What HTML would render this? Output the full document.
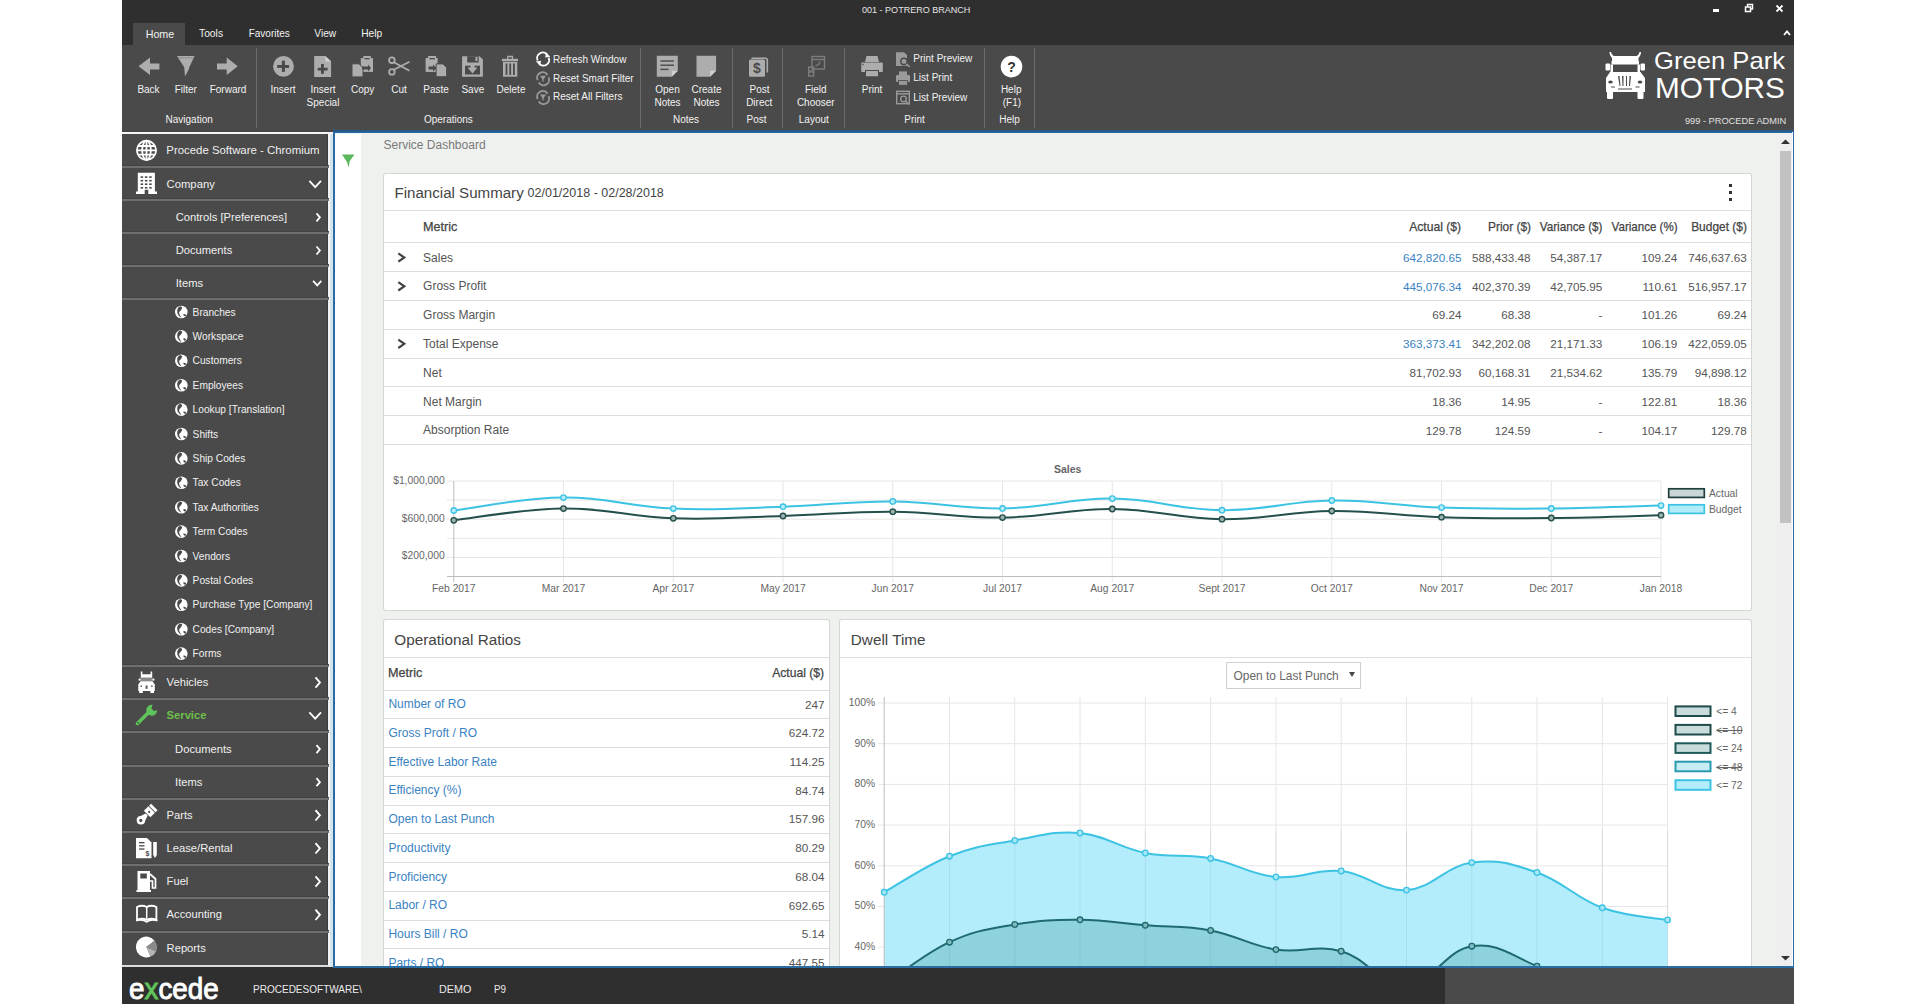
<!DOCTYPE html><html><head><meta charset="utf-8"><style>
html,body{margin:0;padding:0;}
body{width:1916px;height:1004px;position:relative;overflow:hidden;background:#fff;font-family:"Liberation Sans",sans-serif;}
.t{position:absolute;white-space:nowrap;line-height:1;}
.t span{-webkit-text-stroke:inherit;}
.r{position:absolute;}
svg{position:absolute;overflow:visible;}
</style></head><body>
<div class="r" style="left:122px;top:0px;width:1672px;height:45px;background:#2f2f2f;"></div><div class="t" style="top:4.70px;font-size:9.8px;color:#e6e6e6;left:861.50px;transform: scaleX(0.9216);transform-origin:0 0;">001 - POTRERO BRANCH</div><div class="r" style="left:1713px;top:9px;width:6px;height:2.5px;background:#fff;"></div><svg style="left:0;top:0" width="1916" height="45"><g fill="none" stroke="#fff" stroke-width="1.5"><rect x="1745.5" y="7" width="5" height="4.5"/><path d="M1747.5 7 V4.5 H1752.5 V9 H1750.5"/><path d="M1776.5 5.5 L1782.5 11.5 M1782.5 5.5 L1776.5 11.5" stroke-width="1.8"/><path d="M1784 35 L1787 31.5 L1790 35" stroke-width="1.8"/></g></svg><div class="r" style="left:133px;top:23px;width:52px;height:22px;background:#4a4a4a;"></div><div class="t" style="top:28.84px;font-size:10.7px;color:#f2f2f2;left:145.70px;">Home</div><div class="t" style="top:28.78px;font-size:10.3px;color:#f2f2f2;left:199.00px;">Tools</div><div class="t" style="top:29.04px;font-size:10.0px;color:#f2f2f2;left:248.70px;">Favorites</div><div class="t" style="top:28.87px;font-size:10.2px;color:#f2f2f2;left:314.30px;">View</div><div class="t" style="top:28.87px;font-size:10.2px;color:#f2f2f2;left:361.20px;">Help</div><div class="r" style="left:122px;top:45px;width:1672px;height:85px;background:#4a4a4a;"></div><div class="r" style="left:256px;top:48px;width:1px;height:80px;background:#6b6b6b;"></div><div class="r" style="left:640px;top:48px;width:1px;height:80px;background:#6b6b6b;"></div><div class="r" style="left:732px;top:48px;width:1px;height:80px;background:#6b6b6b;"></div><div class="r" style="left:782px;top:48px;width:1px;height:80px;background:#6b6b6b;"></div><div class="r" style="left:844px;top:48px;width:1px;height:80px;background:#6b6b6b;"></div><div class="r" style="left:984px;top:48px;width:1px;height:80px;background:#6b6b6b;"></div><div class="r" style="left:1034px;top:48px;width:1px;height:80px;background:#6b6b6b;"></div><div class="t" style="top:84.94px;font-size:10.0px;color:#f2f2f2;left:148.50px;transform:translateX(-50%);">Back</div><div class="t" style="top:84.94px;font-size:10.0px;color:#f2f2f2;left:185.80px;transform:translateX(-50%);">Filter</div><div class="t" style="top:84.94px;font-size:10.0px;color:#f2f2f2;left:228.00px;transform:translateX(-50%);">Forward</div><div class="t" style="top:115.33px;font-size:10.0px;color:#f2f2f2;left:189.20px;transform:translateX(-50%);">Navigation</div><div class="t" style="top:84.94px;font-size:10.0px;color:#f2f2f2;left:283.00px;transform:translateX(-50%);">Insert</div><div class="t" style="top:84.94px;font-size:10.0px;color:#f2f2f2;left:323.00px;transform:translateX(-50%);">Insert</div><div class="t" style="top:98.13px;font-size:10.0px;color:#f2f2f2;left:323.00px;transform:translateX(-50%);">Special</div><div class="t" style="top:84.94px;font-size:10.0px;color:#f2f2f2;left:362.70px;transform:translateX(-50%);">Copy</div><div class="t" style="top:84.94px;font-size:10.0px;color:#f2f2f2;left:399.00px;transform:translateX(-50%);">Cut</div><div class="t" style="top:84.94px;font-size:10.0px;color:#f2f2f2;left:436.00px;transform:translateX(-50%);">Paste</div><div class="t" style="top:84.94px;font-size:10.0px;color:#f2f2f2;left:472.80px;transform:translateX(-50%);">Save</div><div class="t" style="top:84.94px;font-size:10.0px;color:#f2f2f2;left:511.00px;transform:translateX(-50%);">Delete</div><div class="t" style="top:115.33px;font-size:10.0px;color:#f2f2f2;left:448.40px;transform:translateX(-50%);">Operations</div><div class="t" style="top:54.53px;font-size:10.0px;color:#f2f2f2;left:553.00px;">Refresh Window</div><div class="t" style="top:73.53px;font-size:10.0px;color:#f2f2f2;left:553.00px;">Reset Smart Filter</div><div class="t" style="top:92.33px;font-size:10.0px;color:#f2f2f2;left:553.00px;">Reset All Filters</div><div class="t" style="top:84.94px;font-size:10.0px;color:#f2f2f2;left:667.50px;transform:translateX(-50%);">Open</div><div class="t" style="top:98.13px;font-size:10.0px;color:#f2f2f2;left:667.50px;transform:translateX(-50%);">Notes</div><div class="t" style="top:84.94px;font-size:10.0px;color:#f2f2f2;left:706.50px;transform:translateX(-50%);">Create</div><div class="t" style="top:98.13px;font-size:10.0px;color:#f2f2f2;left:706.50px;transform:translateX(-50%);">Notes</div><div class="t" style="top:115.33px;font-size:10.0px;color:#f2f2f2;left:686.00px;transform:translateX(-50%);">Notes</div><div class="t" style="top:84.94px;font-size:10.0px;color:#f2f2f2;left:759.50px;transform:translateX(-50%);">Post</div><div class="t" style="top:98.13px;font-size:10.0px;color:#f2f2f2;left:759.20px;transform:translateX(-50%);">Direct</div><div class="t" style="top:115.33px;font-size:10.0px;color:#f2f2f2;left:756.50px;transform:translateX(-50%);">Post</div><div class="t" style="top:84.94px;font-size:10.0px;color:#f2f2f2;left:815.80px;transform:translateX(-50%);">Field</div><div class="t" style="top:98.13px;font-size:10.0px;color:#f2f2f2;left:815.80px;transform:translateX(-50%);">Chooser</div><div class="t" style="top:115.33px;font-size:10.0px;color:#f2f2f2;left:813.80px;transform:translateX(-50%);">Layout</div><div class="t" style="top:84.94px;font-size:10.0px;color:#f2f2f2;left:872.00px;transform:translateX(-50%);">Print</div><div class="t" style="top:54.14px;font-size:10.0px;color:#f2f2f2;left:913.30px;">Print Preview</div><div class="t" style="top:73.23px;font-size:10.0px;color:#f2f2f2;left:913.30px;">List Print</div><div class="t" style="top:92.53px;font-size:10.0px;color:#f2f2f2;left:913.30px;">List Preview</div><div class="t" style="top:115.33px;font-size:10.0px;color:#f2f2f2;left:914.50px;transform:translateX(-50%);">Print</div><div class="t" style="top:84.94px;font-size:10.0px;color:#f2f2f2;left:1011.20px;transform:translateX(-50%);">Help</div><div class="t" style="top:98.13px;font-size:10.0px;color:#f2f2f2;left:1011.90px;transform:translateX(-50%);">(F1)</div><div class="t" style="top:115.33px;font-size:10.0px;color:#f2f2f2;left:1009.50px;transform:translateX(-50%);">Help</div><div class="t" style="top:49.48px;font-size:24px;color:#ffffff;left:1654.10px;transform: scaleX(1.0675);transform-origin:0 0;">Green Park</div><div class="t" style="top:73.88px;font-size:29.2px;color:#ffffff;left:1654.70px;transform: scaleX(1.0171);transform-origin:0 0;">MOTORS</div><div class="t" style="top:115.60px;font-size:9.8px;color:#e0e0e0;right:129.80px;transform: scaleX(0.9452);transform-origin:100% 0;">999 - PROCEDE ADMIN</div><svg style="left:0;top:0" width="1916" height="130"><path d="M138.5 66.3 L150 57.5 L150 63.5 L159.4 63.5 L159.4 69.4 L150 69.4 L150 75 Z" fill="#adadad"/><path d="M237.7 66.3 L226.7 57.5 L226.7 63.5 L217 63.5 L217 69.4 L226.7 69.4 L226.7 75 Z" fill="#adadad"/><path d="M177 56 L194.5 56 L189.3 67.3 L188.5 70 L185 76.5 L184.2 67.3 Z" fill="#adadad"/><rect x="178" y="57.3" width="15.5" height="1" fill="#8c8c8c"/><circle cx="283.5" cy="66.4" r="10.4" fill="#adadad"/><rect x="277.2" y="65" width="11.9" height="2.9" fill="#4a4a4a"/><rect x="281.9" y="60.6" width="3" height="11.3" fill="#4a4a4a"/><path d="M314.2 56 L325.4 56 L331.1 61.5 L331.1 76.9 L314.2 76.9 Z" fill="#adadad"/><path d="M325.4 56 L331.1 61.5 L325.4 61.5 Z" fill="#cfcfcf"/><rect x="317.6" y="67.8" width="10" height="2.7" fill="#4a4a4a"/><rect x="321" y="64" width="2.9" height="9.8" fill="#4a4a4a"/><path d="M360.8 58.1 L373 58.1 L373 71.9 L360.8 71.9 Z" fill="#adadad"/><rect x="363.3" y="56" width="7.5" height="3.5" fill="#adadad"/><rect x="364.5" y="58" width="5" height="1.3" fill="#4a4a4a"/><path d="M352 63.8 L359 63.8 L363 67.8 L363 76.9 L352 76.9 Z" fill="#adadad" stroke="#4a4a4a" stroke-width="1"/><path d="M362 66.5 L368 66.5 L368 64.5 L371 68 L368 71.5 L368 69.5 L362 69.5 Z" fill="#4a4a4a"/><g fill="none" stroke="#adadad" stroke-width="1.8"><circle cx="391.9" cy="60.2" r="2.8"/><circle cx="391.9" cy="71.9" r="2.8"/><path d="M393.8 62.3 L409.5 70.8 M393.8 69.8 L409.5 61.7"/></g><rect x="425.6" y="58" width="12" height="13.9" fill="#adadad"/><rect x="428.1" y="56" width="8" height="3.5" fill="#adadad"/><rect x="429.3" y="58" width="5.6" height="1.3" fill="#4a4a4a"/><path d="M436.1 63.9 L443 63.9 L446.7 67.6 L446.7 76.7 L436.1 76.7 Z" fill="#adadad" stroke="#4a4a4a" stroke-width="1"/><path d="M428.5 66.5 L433 66.5 L433 64.5 L436.5 68 L433 71.5 L433 69.5 L428.5 69.5 Z" fill="#4a4a4a"/><path d="M462.1 56.2 L479.5 56.2 L482.9 59.6 L482.9 76.7 L462.1 76.7 Z" fill="#adadad"/><rect x="467.2" y="56.2" width="11.5" height="6.3" fill="#4a4a4a"/><rect x="475.5" y="57" width="2" height="4" fill="#adadad"/><rect x="465" y="65.7" width="15" height="8.8" fill="#4a4a4a"/><path d="M470.5 63 L474.5 63 L474.5 67.5 L477.5 67.5 L472.5 73.5 L467.5 67.5 L470.5 67.5 Z" fill="#adadad"/><rect x="501.9" y="58.8" width="16.1" height="2.4" fill="#adadad"/><path d="M507.8 59 V56.5 H512.5 V59" fill="none" stroke="#adadad" stroke-width="1.3"/><rect x="503" y="61.9" width="14.3" height="14.8" fill="#adadad"/><rect x="505.6" y="63.5" width="1.8" height="11.5" fill="#4a4a4a"/><rect x="509.3" y="63.5" width="1.8" height="11.5" fill="#4a4a4a"/><rect x="513" y="63.5" width="1.8" height="11.5" fill="#4a4a4a"/><g fill="none" stroke="#fff" stroke-width="1.9"><path d="M537.6 60.5 A5.6 5.6 0 0 1 547.5 55.3"/><path d="M548.6 57.7 A5.6 5.6 0 0 1 538.7 62.9"/></g><path d="M546 52.5 L550.3 56.8 L545.2 57.5 Z M540.2 65.7 L535.9 61.4 L541 60.7 Z" fill="#fff"/><g fill="none" stroke="#9a9a9a" stroke-width="1.9"><path d="M537.6 80.2 A5.6 5.6 0 0 1 547.5 75.0"/><path d="M548.6 77.39999999999999 A5.6 5.6 0 0 1 538.7 82.6"/></g><path d="M540 75.8 L546 75.8 L543.7 79.3 L543.5 81.8 L542.5 81.8 L542.3 79.3 Z" fill="#9a9a9a"/><g fill="none" stroke="#9a9a9a" stroke-width="1.9"><path d="M537.6 99.0 A5.6 5.6 0 0 1 547.5 93.8"/><path d="M548.6 96.19999999999999 A5.6 5.6 0 0 1 538.7 101.39999999999999"/></g><path d="M540 94.6 L546 94.6 L543.7 98.1 L543.5 100.6 L542.5 100.6 L542.3 98.1 Z" fill="#9a9a9a"/><path d="M656.8 55.8 L677.8 55.8 L677.8 70.8 L671.8 76.8 L656.8 76.8 Z" fill="#adadad"/><path d="M671.8 76.8 L671.8 70.8 L677.8 70.8 Z" fill="#d0d0d0"/><rect x="660.4" y="60.3" width="13.6" height="1.4" fill="#4a4a4a"/><rect x="660.4" y="64.5" width="13.6" height="1.4" fill="#4a4a4a"/><rect x="660.4" y="68.7" width="8.2" height="1.4" fill="#4a4a4a"/><path d="M696.5 55.8 L716.1 55.8 L716.1 70.8 L710.1 76.8 L696.5 76.8 Z" fill="#adadad"/><path d="M710.1 76.8 L710.1 70.8 L716.1 70.8 Z" fill="#d0d0d0"/><path d="M751.5 58.3 L765.5 58.3 A1.8 1.8 0 0 1 767.3 60.1 L767.3 72.5" fill="none" stroke="#adadad" stroke-width="1.6"/><rect x="749" y="59.5" width="16" height="17.3" rx="1.5" fill="#adadad"/><text x="757" y="73.2" font-family="Liberation Sans" font-weight="bold" font-size="14" fill="#4a4a4a" text-anchor="middle">$</text><g fill="none" stroke="#7d7d7d" stroke-width="1.4"><rect x="812" y="56.5" width="12.5" height="12.5"/><path d="M812 59.5 H824.5"/><path d="M815.5 66 L819 64 L820 61.5"/><rect x="808.7" y="67" width="5" height="4" /><rect x="808.7" y="72" width="5" height="4"/></g><path d="M866.5 56 L877.5 56 L879 62 L865 62 Z" fill="#adadad"/><rect x="861.2" y="62.5" width="21.6" height="9.5" rx="1" fill="#adadad"/><rect x="865.5" y="70.5" width="13" height="6.3" fill="#adadad" stroke="#4a4a4a" stroke-width="1"/><rect x="862.3" y="63.8" width="1.3" height="1.3" fill="#4a4a4a"/><path d="M896 52.2 L904 52.2 L907 55 L907 66 L896 66 Z" fill="#9a9a9a"/><circle cx="904" cy="61.5" r="3.2" fill="none" stroke="#4a4a4a" stroke-width="1.4"/><path d="M906.3 63.8 L909.8 67" stroke="#9a9a9a" stroke-width="1.6"/><rect x="899" y="71.4" width="8" height="4" fill="#9a9a9a"/><rect x="896" y="75" width="14" height="7" rx="1" fill="#9a9a9a"/><rect x="898.5" y="80.5" width="9" height="4.7" fill="#9a9a9a" stroke="#4a4a4a" stroke-width="0.8"/><rect x="896.7" y="91.3" width="12.6" height="12.4" fill="none" stroke="#9a9a9a" stroke-width="1.4"/><path d="M896.7 93.8 H909.3" stroke="#9a9a9a" stroke-width="1.4"/><circle cx="903.5" cy="99" r="2.8" fill="none" stroke="#9a9a9a" stroke-width="1.3"/><path d="M905.5 101 L909 104.5" stroke="#9a9a9a" stroke-width="1.6"/><circle cx="1011.5" cy="66.6" r="10.8" fill="#fff"/><text x="1011.5" y="71.6" font-family="Liberation Sans" font-weight="bold" font-size="14" fill="#333" text-anchor="middle">?</text><g fill="#fff"><path d="M1609.5 52 C1609.5 55 1611 57 1612 58 L1612 61 L1638.5 61 L1638.5 58 C1639.5 57 1641 55 1641 52 L1639.5 52 C1639 54 1638 55.5 1636.5 56 L1614 56 C1612.5 55.5 1611.5 54 1611 52 Z"/><rect x="1611.5" y="61" width="27.5" height="3.5"/><rect x="1605.5" y="63.5" width="4.5" height="7" rx="1"/><rect x="1640.5" y="63.5" width="4.5" height="7" rx="1"/><rect x="1610.5" y="64.5" width="2.5" height="8"/><rect x="1637.5" y="64.5" width="2.5" height="8"/><path d="M1610 72 L1640.5 72 L1645 78 L1645 92 L1606 92 L1606 78 Z"/><rect x="1607" y="91" width="6" height="8" rx="1"/><rect x="1637.5" y="91" width="6" height="8" rx="1"/></g><g fill="#4a4a4a"><path d="M1618 76 L1619.5 86 L1620.5 86 L1619.5 76 Z M1622 76 L1622.5 86 L1623.5 86 L1623.5 76 Z M1626 76 L1626 86 L1627 86 L1627 76 Z M1629.5 76 L1629 86 L1630 86 L1631 76 Z"/><ellipse cx="1610.5" cy="82" rx="2.3" ry="1.6"/><ellipse cx="1640" cy="82" rx="2.3" ry="1.6"/><rect x="1611" y="86.5" width="4" height="1"/><rect x="1635.5" y="86.5" width="4" height="1"/><rect x="1618" y="88.5" width="14" height="1"/></g></svg><div class="r" style="left:122px;top:130px;width:211px;height:2px;background:#464646;"></div><div class="r" style="left:122px;top:132px;width:211px;height:835px;background:#e4e4e4;"></div><div class="r" style="left:328px;top:132px;width:2px;height:835px;background:#f2f2f2;"></div><div class="r" style="left:330px;top:133px;width:3px;height:834px;background:#d6e4ee;"></div><div class="r" style="left:333px;top:130px;width:1459px;height:837px;background:#2c6aa0;"></div><div class="r" style="left:333px;top:130px;width:1461px;height:2px;background:#245a8c;"></div><div class="r" style="left:335px;top:133px;width:1457px;height:833px;background:#e6f7ff;"></div><div class="r" style="left:335px;top:134px;width:1456px;height:832px;background:#ffffff;"></div><div class="r" style="left:1792.5px;top:130px;width:1.5px;height:837px;background:#2c6aa0;"></div><div class="r" style="left:361px;top:133px;width:1431px;height:833px;background:#eef1ee;"></div><div class="r" style="left:122px;top:134px;width:205px;height:832px;background:#4a4a4a;"></div><div class="r" style="left:327px;top:134px;width:1px;height:832px;background:#3c3c3c;"></div><div class="r" style="left:122px;top:132px;width:211px;height:2px;background:#f4f4f4;"></div><div class="r" style="left:122px;top:165px;width:207px;height:1px;background:#434343;"></div><div class="r" style="left:122px;top:166px;width:207px;height:2px;background:#6e6e6e;"></div><div class="r" style="left:122px;top:198px;width:207px;height:1px;background:#434343;"></div><div class="r" style="left:122px;top:199px;width:207px;height:2px;background:#6e6e6e;"></div><div class="r" style="left:122px;top:231px;width:207px;height:1px;background:#434343;"></div><div class="r" style="left:122px;top:232px;width:207px;height:2px;background:#6e6e6e;"></div><div class="r" style="left:122px;top:264px;width:207px;height:1px;background:#434343;"></div><div class="r" style="left:122px;top:265px;width:207px;height:2px;background:#6e6e6e;"></div><div class="r" style="left:122px;top:297px;width:207px;height:1px;background:#434343;"></div><div class="r" style="left:122px;top:298px;width:207px;height:2px;background:#6e6e6e;"></div><div class="r" style="left:122px;top:664px;width:207px;height:1px;background:#434343;"></div><div class="r" style="left:122px;top:665px;width:207px;height:2px;background:#6e6e6e;"></div><div class="r" style="left:122px;top:697px;width:207px;height:1px;background:#434343;"></div><div class="r" style="left:122px;top:698px;width:207px;height:2px;background:#6e6e6e;"></div><div class="r" style="left:122px;top:730px;width:207px;height:1px;background:#434343;"></div><div class="r" style="left:122px;top:731px;width:207px;height:2px;background:#6e6e6e;"></div><div class="r" style="left:122px;top:764px;width:207px;height:1px;background:#434343;"></div><div class="r" style="left:122px;top:765px;width:207px;height:2px;background:#6e6e6e;"></div><div class="r" style="left:122px;top:797px;width:207px;height:1px;background:#434343;"></div><div class="r" style="left:122px;top:798px;width:207px;height:2px;background:#6e6e6e;"></div><div class="r" style="left:122px;top:830px;width:207px;height:1px;background:#434343;"></div><div class="r" style="left:122px;top:831px;width:207px;height:2px;background:#6e6e6e;"></div><div class="r" style="left:122px;top:863px;width:207px;height:1px;background:#434343;"></div><div class="r" style="left:122px;top:864px;width:207px;height:2px;background:#6e6e6e;"></div><div class="r" style="left:122px;top:896px;width:207px;height:1px;background:#434343;"></div><div class="r" style="left:122px;top:897px;width:207px;height:2px;background:#6e6e6e;"></div><div class="r" style="left:122px;top:930px;width:207px;height:1px;background:#434343;"></div><div class="r" style="left:122px;top:931px;width:207px;height:2px;background:#6e6e6e;"></div><div class="r" style="left:122px;top:965px;width:207px;height:2px;background:#dcdcdc;"></div><div class="t" style="top:145.45px;font-size:11.4px;color:#f0f0f0;left:166.30px;">Procede Software - Chromium</div><div class="t" style="top:178.53px;font-size:11.3px;color:#f0f0f0;left:166.50px;">Company</div><div class="t" style="top:211.72px;font-size:11.2px;color:#f0f0f0;left:175.70px;">Controls [Preferences]</div><div class="t" style="top:244.92px;font-size:11.2px;color:#f0f0f0;left:175.70px;">Documents</div><div class="t" style="top:278.12px;font-size:11.2px;color:#f0f0f0;left:175.70px;">Items</div><div class="t" style="top:307.67px;font-size:10.2px;color:#f0f0f0;left:192.60px;">Branches</div><div class="t" style="top:332.07px;font-size:10.2px;color:#f0f0f0;left:192.60px;">Workspace</div><div class="t" style="top:356.47px;font-size:10.2px;color:#f0f0f0;left:192.60px;">Customers</div><div class="t" style="top:380.87px;font-size:10.2px;color:#f0f0f0;left:192.60px;">Employees</div><div class="t" style="top:405.27px;font-size:10.2px;color:#f0f0f0;left:192.60px;">Lookup [Translation]</div><div class="t" style="top:429.67px;font-size:10.2px;color:#f0f0f0;left:192.60px;">Shifts</div><div class="t" style="top:454.07px;font-size:10.2px;color:#f0f0f0;left:192.60px;">Ship Codes</div><div class="t" style="top:478.47px;font-size:10.2px;color:#f0f0f0;left:192.60px;">Tax Codes</div><div class="t" style="top:502.87px;font-size:10.2px;color:#f0f0f0;left:192.60px;">Tax Authorities</div><div class="t" style="top:527.27px;font-size:10.2px;color:#f0f0f0;left:192.60px;">Term Codes</div><div class="t" style="top:551.67px;font-size:10.2px;color:#f0f0f0;left:192.60px;">Vendors</div><div class="t" style="top:576.07px;font-size:10.2px;color:#f0f0f0;left:192.60px;">Postal Codes</div><div class="t" style="top:600.47px;font-size:10.2px;color:#f0f0f0;left:192.60px;">Purchase Type [Company]</div><div class="t" style="top:624.87px;font-size:10.2px;color:#f0f0f0;left:192.60px;">Codes [Company]</div><div class="t" style="top:649.27px;font-size:10.2px;color:#f0f0f0;left:192.60px;">Forms</div><div class="t" style="top:677.12px;font-size:11.2px;color:#f0f0f0;left:166.60px;">Vehicles</div><div class="t" style="top:710.02px;font-size:11.2px;color:#6cc04a;font-weight:bold;left:166.60px;">Service</div><div class="t" style="top:743.62px;font-size:11.2px;color:#f0f0f0;left:175.10px;">Documents</div><div class="t" style="top:776.52px;font-size:11.2px;color:#f0f0f0;left:175.10px;">Items</div><div class="t" style="top:809.82px;font-size:11.2px;color:#f0f0f0;left:166.60px;">Parts</div><div class="t" style="top:842.72px;font-size:11.2px;color:#f0f0f0;left:166.60px;">Lease/Rental</div><div class="t" style="top:876.02px;font-size:11.2px;color:#f0f0f0;left:166.60px;">Fuel</div><div class="t" style="top:909.32px;font-size:11.2px;color:#f0f0f0;left:166.60px;">Accounting</div><div class="t" style="top:942.52px;font-size:11.2px;color:#f0f0f0;left:166.60px;">Reports</div><svg style="left:0;top:0" width="1916" height="1004"><g fill="none" stroke="#ffffff" stroke-width="1.8"><circle cx="146.5" cy="150.3" r="9.6"/><ellipse cx="146.5" cy="150.3" rx="4.32" ry="9.6"/><path d="M146.5 140.70000000000002 V159.9 M136.9 150.3 H156.1 M138.15 145.98 H154.85 M138.15 154.62 H154.85"/></g><path d="M137.8 172.8 L154.9 172.8 L154.9 191.6 L157 191.6 L157 194 L148.3 194 L148.3 189.8 L144.7 189.8 L144.7 194 L136 194 L136 191.6 L137.8 191.6 Z" fill="#ffffff"/><rect x="140.6" y="176.3" width="2.5" height="1.6" fill="#4a4a4a"/><rect x="144.9" y="176.3" width="2.5" height="1.6" fill="#4a4a4a"/><rect x="149.2" y="176.3" width="2.5" height="1.6" fill="#4a4a4a"/><rect x="140.6" y="179.9" width="2.5" height="1.6" fill="#4a4a4a"/><rect x="144.9" y="179.9" width="2.5" height="1.6" fill="#4a4a4a"/><rect x="149.2" y="179.9" width="2.5" height="1.6" fill="#4a4a4a"/><rect x="140.6" y="183.4" width="2.5" height="1.6" fill="#4a4a4a"/><rect x="144.9" y="183.4" width="2.5" height="1.6" fill="#4a4a4a"/><rect x="149.2" y="183.4" width="2.5" height="1.6" fill="#4a4a4a"/><rect x="140.6" y="187.0" width="2.5" height="1.6" fill="#4a4a4a"/><rect x="144.9" y="187.0" width="2.5" height="1.6" fill="#4a4a4a"/><rect x="149.2" y="187.0" width="2.5" height="1.6" fill="#4a4a4a"/><circle cx="181.3" cy="312.0" r="6.3" fill="#ffffff"/><path d="M180.5 306.2 C178 306.9 176.8 309.4 177.3 312.4 C177.8 314.9 179.5 316.9 181.5 317.6 C180 315.4 178.6 313.4 179.3 311.7 C180.8 310.6 182 308.9 182.2 307.4 Z" fill="#4a4a4a"/><path d="M183.3 314.0 C185 313.6 186.2 314.4 186 315.7 C185 316.7 183.5 316.4 183.3 314.0 Z" fill="#4a4a4a"/><circle cx="181.3" cy="336.4" r="6.3" fill="#ffffff"/><path d="M180.5 330.6 C178 331.3 176.8 333.8 177.3 336.8 C177.8 339.3 179.5 341.3 181.5 342.0 C180 339.8 178.6 337.8 179.3 336.1 C180.8 335.0 182 333.3 182.2 331.8 Z" fill="#4a4a4a"/><path d="M183.3 338.4 C185 338.0 186.2 338.8 186 340.1 C185 341.1 183.5 340.8 183.3 338.4 Z" fill="#4a4a4a"/><circle cx="181.3" cy="360.8" r="6.3" fill="#ffffff"/><path d="M180.5 355.0 C178 355.7 176.8 358.2 177.3 361.2 C177.8 363.7 179.5 365.7 181.5 366.4 C180 364.2 178.6 362.2 179.3 360.5 C180.8 359.4 182 357.7 182.2 356.2 Z" fill="#4a4a4a"/><path d="M183.3 362.8 C185 362.4 186.2 363.2 186 364.5 C185 365.5 183.5 365.2 183.3 362.8 Z" fill="#4a4a4a"/><circle cx="181.3" cy="385.2" r="6.3" fill="#ffffff"/><path d="M180.5 379.4 C178 380.1 176.8 382.6 177.3 385.6 C177.8 388.1 179.5 390.1 181.5 390.8 C180 388.6 178.6 386.6 179.3 384.9 C180.8 383.8 182 382.1 182.2 380.6 Z" fill="#4a4a4a"/><path d="M183.3 387.2 C185 386.8 186.2 387.6 186 388.9 C185 389.9 183.5 389.6 183.3 387.2 Z" fill="#4a4a4a"/><circle cx="181.3" cy="409.6" r="6.3" fill="#ffffff"/><path d="M180.5 403.8 C178 404.5 176.8 407.0 177.3 410.0 C177.8 412.5 179.5 414.5 181.5 415.2 C180 413.0 178.6 411.0 179.3 409.3 C180.8 408.2 182 406.5 182.2 405.0 Z" fill="#4a4a4a"/><path d="M183.3 411.6 C185 411.2 186.2 412.0 186 413.3 C185 414.3 183.5 414.0 183.3 411.6 Z" fill="#4a4a4a"/><circle cx="181.3" cy="434.0" r="6.3" fill="#ffffff"/><path d="M180.5 428.2 C178 428.9 176.8 431.4 177.3 434.4 C177.8 436.9 179.5 438.9 181.5 439.6 C180 437.4 178.6 435.4 179.3 433.7 C180.8 432.6 182 430.9 182.2 429.4 Z" fill="#4a4a4a"/><path d="M183.3 436.0 C185 435.6 186.2 436.4 186 437.7 C185 438.7 183.5 438.4 183.3 436.0 Z" fill="#4a4a4a"/><circle cx="181.3" cy="458.4" r="6.3" fill="#ffffff"/><path d="M180.5 452.6 C178 453.3 176.8 455.8 177.3 458.8 C177.8 461.3 179.5 463.3 181.5 464.0 C180 461.8 178.6 459.8 179.3 458.1 C180.8 457.0 182 455.3 182.2 453.8 Z" fill="#4a4a4a"/><path d="M183.3 460.4 C185 460.0 186.2 460.8 186 462.1 C185 463.1 183.5 462.8 183.3 460.4 Z" fill="#4a4a4a"/><circle cx="181.3" cy="482.8" r="6.3" fill="#ffffff"/><path d="M180.5 477.0 C178 477.7 176.8 480.2 177.3 483.2 C177.8 485.7 179.5 487.7 181.5 488.4 C180 486.2 178.6 484.2 179.3 482.5 C180.8 481.4 182 479.7 182.2 478.2 Z" fill="#4a4a4a"/><path d="M183.3 484.8 C185 484.4 186.2 485.2 186 486.5 C185 487.5 183.5 487.2 183.3 484.8 Z" fill="#4a4a4a"/><circle cx="181.3" cy="507.2" r="6.3" fill="#ffffff"/><path d="M180.5 501.4 C178 502.1 176.8 504.6 177.3 507.6 C177.8 510.1 179.5 512.1 181.5 512.8 C180 510.6 178.6 508.6 179.3 506.9 C180.8 505.8 182 504.1 182.2 502.6 Z" fill="#4a4a4a"/><path d="M183.3 509.2 C185 508.8 186.2 509.6 186 510.9 C185 511.9 183.5 511.6 183.3 509.2 Z" fill="#4a4a4a"/><circle cx="181.3" cy="531.6" r="6.3" fill="#ffffff"/><path d="M180.5 525.8 C178 526.5 176.8 529.0 177.3 532.0 C177.8 534.5 179.5 536.5 181.5 537.2 C180 535.0 178.6 533.0 179.3 531.3 C180.8 530.2 182 528.5 182.2 527.0 Z" fill="#4a4a4a"/><path d="M183.3 533.6 C185 533.2 186.2 534.0 186 535.3 C185 536.3 183.5 536.0 183.3 533.6 Z" fill="#4a4a4a"/><circle cx="181.3" cy="556.0" r="6.3" fill="#ffffff"/><path d="M180.5 550.2 C178 550.9 176.8 553.4 177.3 556.4 C177.8 558.9 179.5 560.9 181.5 561.6 C180 559.4 178.6 557.4 179.3 555.7 C180.8 554.6 182 552.9 182.2 551.4 Z" fill="#4a4a4a"/><path d="M183.3 558.0 C185 557.6 186.2 558.4 186 559.7 C185 560.7 183.5 560.4 183.3 558.0 Z" fill="#4a4a4a"/><circle cx="181.3" cy="580.4" r="6.3" fill="#ffffff"/><path d="M180.5 574.6 C178 575.3 176.8 577.8 177.3 580.8 C177.8 583.3 179.5 585.3 181.5 586.0 C180 583.8 178.6 581.8 179.3 580.1 C180.8 579.0 182 577.3 182.2 575.8 Z" fill="#4a4a4a"/><path d="M183.3 582.4 C185 582.0 186.2 582.8 186 584.1 C185 585.1 183.5 584.8 183.3 582.4 Z" fill="#4a4a4a"/><circle cx="181.3" cy="604.8" r="6.3" fill="#ffffff"/><path d="M180.5 599.0 C178 599.7 176.8 602.2 177.3 605.2 C177.8 607.7 179.5 609.7 181.5 610.4 C180 608.2 178.6 606.2 179.3 604.5 C180.8 603.4 182 601.7 182.2 600.2 Z" fill="#4a4a4a"/><path d="M183.3 606.8 C185 606.4 186.2 607.2 186 608.5 C185 609.5 183.5 609.2 183.3 606.8 Z" fill="#4a4a4a"/><circle cx="181.3" cy="629.2" r="6.3" fill="#ffffff"/><path d="M180.5 623.4 C178 624.1 176.8 626.6 177.3 629.6 C177.8 632.1 179.5 634.1 181.5 634.8 C180 632.6 178.6 630.6 179.3 628.9 C180.8 627.8 182 626.1 182.2 624.6 Z" fill="#4a4a4a"/><path d="M183.3 631.2 C185 630.8 186.2 631.6 186 632.9 C185 633.9 183.5 633.6 183.3 631.2 Z" fill="#4a4a4a"/><circle cx="181.3" cy="653.6" r="6.3" fill="#ffffff"/><path d="M180.5 647.8 C178 648.5 176.8 651.0 177.3 654.0 C177.8 656.5 179.5 658.5 181.5 659.2 C180 657.0 178.6 655.0 179.3 653.3 C180.8 652.2 182 650.5 182.2 649.0 Z" fill="#4a4a4a"/><path d="M183.3 655.6 C185 655.2 186.2 656.0 186 657.3 C185 658.3 183.5 658.0 183.3 655.6 Z" fill="#4a4a4a"/><path d="M309.4 180.81 L315.2 187.19 L321.0 180.81" fill="none" stroke="#ffffff" stroke-width="1.8"/><path d="M316.5 213.3 L319.90 217.3 L316.5 221.3" fill="none" stroke="#ffffff" stroke-width="1.8"/><path d="M316.5 246.5 L319.90 250.5 L316.5 254.5" fill="none" stroke="#ffffff" stroke-width="1.8"/><path d="M313.09999999999997 280.85 L317.2 285.36 L321.3 280.85" fill="none" stroke="#ffffff" stroke-width="1.8"/><path d="M315.5 677.3 L319.92 682.5 L315.5 687.7" fill="none" stroke="#ffffff" stroke-width="1.9"/><path d="M309.4 712.31 L315.2 718.69 L321.0 712.31" fill="none" stroke="#ffffff" stroke-width="1.8"/><path d="M316.5 745.1 L319.90 749.1 L316.5 753.1" fill="none" stroke="#ffffff" stroke-width="1.8"/><path d="M316.5 778.2 L319.90 782.2 L316.5 786.2" fill="none" stroke="#ffffff" stroke-width="1.8"/><path d="M315.5 810.0999999999999 L319.92 815.3 L315.5 820.5" fill="none" stroke="#ffffff" stroke-width="1.9"/><path d="M315.5 843.0999999999999 L319.92 848.3 L315.5 853.5" fill="none" stroke="#ffffff" stroke-width="1.9"/><path d="M315.5 876.3 L319.92 881.5 L315.5 886.7" fill="none" stroke="#ffffff" stroke-width="1.9"/><path d="M315.5 909.5999999999999 L319.92 914.8 L315.5 920.0" fill="none" stroke="#ffffff" stroke-width="1.9"/><g fill="#ffffff"><rect x="140.8" y="671.5" width="1.6" height="4"/><rect x="150.6" y="671.5" width="1.6" height="4"/><path d="M141 674.3 L152 674.3 L152.3 678 L140.7 678 Z"/><rect x="140.5" y="677.5" width="12" height="3.8" rx="1.2" fill="#8a8a8a"/><rect x="138.6" y="678.6" width="2" height="2"/><rect x="152.4" y="678.6" width="2" height="2"/><path d="M140.5 681.2 L152.5 681.2 L154.8 684.5 L154.8 691 L138.3 691 L138.3 684.5 Z"/><rect x="139.2" y="690" width="3.6" height="3"/><rect x="150.4" y="690" width="3.6" height="3"/></g><g fill="#5a5a5a"><rect x="140.5" y="685.3" width="1.3" height="1.7"/><rect x="145.6" y="685.5" width="2" height="3.3"/><rect x="151.2" y="685.3" width="1.3" height="1.7"/></g><g><path d="M137.5 723.5 L149 712" stroke="#5dc35a" stroke-width="3.6" stroke-linecap="round"/><path d="M152.5 704.8 A5.5 5.5 0 1 0 157.2 710.2 L153.8 711 L151.5 708.5 Z" fill="#5dc35a"/><circle cx="138.3" cy="722.8" r="0.9" fill="#2a5a2a"/></g><g transform="translate(149.2 812) rotate(45)"><g fill="#fff"><rect x="-4.6" y="-7.2" width="9.2" height="2.8"/><rect x="-4.6" y="-3.4" width="9.2" height="6.3"/><path d="M-1.5 3.6 L1.5 3.6 L3.2 8.8 A4.3 4.3 0 1 1 -3.2 8.8 Z"/></g><circle cx="0" cy="0" r="1.1" fill="#4a4a4a"/><circle cx="0" cy="11.9" r="1.6" fill="#4a4a4a"/></g><path d="M136 838 L147 838 L151.5 842.5 L151.5 858.2 L136 858.2 Z" fill="#ffffff"/><g fill="#4a4a4a"><rect x="139" y="842" width="5.5" height="1.3"/><rect x="139" y="845.2" width="5.5" height="1.3"/><rect x="139" y="848.4" width="5.5" height="1.3"/></g><text x="147.5" y="856" font-family="Liberation Sans" font-size="7" font-weight="bold" fill="#4a4a4a" text-anchor="middle">$</text><path d="M153.2 842 L156.8 842 L156.8 855 L155 858 L153.2 855 Z" fill="#ffffff"/><path d="M137.5 871 L150 871 L150 890 L151 890 L151 892 L136.5 892 L136.5 890 L137.5 890 Z" fill="#ffffff"/><rect x="140.3" y="873.5" width="6.5" height="5" fill="#4a4a4a"/><path d="M150 874 L155.5 879 L155.5 888 L152.5 888 L152.5 881 L150 881" fill="none" stroke="#ffffff" stroke-width="1.7"/><path d="M137 907 C140 905.5 144 905.5 146.7 907 C149.4 905.5 153.4 905.5 156.4 907 L156.4 920 C153.4 918.5 149.4 918.5 146.7 920 C144 918.5 140 918.5 137 920 Z" fill="none" stroke="#ffffff" stroke-width="1.8"/><path d="M146.7 907 V920" stroke="#ffffff" stroke-width="1.5"/><path d="M136 920.5 C140 919.5 144 919.5 146.7 922 C149.4 919.5 153.4 919.5 157.4 920.5" fill="none" stroke="#ffffff" stroke-width="1.6"/><path d="M154.6 940.8 A10.4 10.4 0 1 0 150.5 956.5 L146.4 947.1 Z" fill="#ffffff"/><path d="M154.6 940.8 A10.4 10.4 0 0 1 156.2 951.5 L146.4 947.1 Z" fill="#8a8a8a"/><path d="M156.2 951.5 A10.4 10.4 0 0 1 150.5 956.5 L146.4 947.1 Z" fill="#b5b5b5"/><path d="M342 154.5 L354.5 154.5 L349.8 161 L348.5 167.5 L347 162 Z" fill="#5cb85c"/></svg><div class="t" style="top:138.84px;font-size:12.0px;color:#7a7a7a;left:383.50px;">Service Dashboard</div><div class="r" style="left:383px;top:173px;width:1369px;height:438px;background:#d3d6d3;border-radius:3px;"></div><div class="r" style="left:384px;top:174px;width:1367px;height:436px;background:#ffffff;border-radius:2px;"></div><div class="t" style="top:185.22px;font-size:15.1px;color:#444;left:394.50px;">Financial Summary</div><div class="t" style="top:187.42px;font-size:12.5px;color:#444;left:527.60px;">02/01/2018 - 02/28/2018</div><div class="r" style="left:384px;top:210px;width:1367px;height:1px;background:#dedede;"></div><div class="r" style="left:384px;top:242px;width:1367px;height:1px;background:#dedede;"></div><div class="r" style="left:384px;top:271px;width:1367px;height:1px;background:#dedede;"></div><div class="r" style="left:384px;top:300px;width:1367px;height:1px;background:#dedede;"></div><div class="r" style="left:384px;top:329px;width:1367px;height:1px;background:#dedede;"></div><div class="r" style="left:384px;top:358px;width:1367px;height:1px;background:#dedede;"></div><div class="r" style="left:384px;top:386px;width:1367px;height:1px;background:#dedede;"></div><div class="r" style="left:384px;top:415px;width:1367px;height:1px;background:#dedede;"></div><div class="r" style="left:384px;top:444px;width:1367px;height:1px;background:#dedede;"></div><div class="t" style="top:221.00px;font-size:12.4px;color:#444;left:423.10px;transform: scaleX(1.0192);transform-origin:0 0;-webkit-text-stroke:0.25px #444;">Metric</div><div class="t" style="top:221.17px;font-size:12.2px;color:#444;right:454.60px;transform: scaleX(0.9961);transform-origin:100% 0;-webkit-text-stroke:0.25px #444;">Actual ($)</div><div class="t" style="top:221.17px;font-size:12.2px;color:#444;right:385.40px;transform: scaleX(0.9783);transform-origin:100% 0;-webkit-text-stroke:0.25px #444;">Prior ($)</div><div class="t" style="top:221.17px;font-size:12.2px;color:#444;right:313.70px;transform: scaleX(0.9582);transform-origin:100% 0;-webkit-text-stroke:0.25px #444;">Variance ($)</div><div class="t" style="top:221.17px;font-size:12.2px;color:#444;right:238.70px;transform: scaleX(0.9482);transform-origin:100% 0;-webkit-text-stroke:0.25px #444;">Variance (%)</div><div class="t" style="top:221.17px;font-size:12.2px;color:#444;right:169.20px;transform: scaleX(0.9796);transform-origin:100% 0;-webkit-text-stroke:0.25px #444;">Budget ($)</div><div class="t" style="top:251.64px;font-size:12.0px;color:#555;left:423.10px;">Sales</div><div class="t" style="top:251.90px;font-size:11.7px;color:#3a82c2;right:454.60px;">642,820.65</div><div class="t" style="top:251.90px;font-size:11.7px;color:#555;right:385.40px;">588,433.48</div><div class="t" style="top:251.90px;font-size:11.7px;color:#555;right:313.70px;">54,387.17</div><div class="t" style="top:251.90px;font-size:11.7px;color:#555;right:238.70px;">109.24</div><div class="t" style="top:251.90px;font-size:11.7px;color:#555;right:169.20px;">746,637.63</div><div class="t" style="top:280.42px;font-size:12.0px;color:#555;left:423.10px;">Gross Profit</div><div class="t" style="top:280.68px;font-size:11.7px;color:#3a82c2;right:454.60px;">445,076.34</div><div class="t" style="top:280.68px;font-size:11.7px;color:#555;right:385.40px;">402,370.39</div><div class="t" style="top:280.68px;font-size:11.7px;color:#555;right:313.70px;">42,705.95</div><div class="t" style="top:280.68px;font-size:11.7px;color:#555;right:238.70px;">110.61</div><div class="t" style="top:280.68px;font-size:11.7px;color:#555;right:169.20px;">516,957.17</div><div class="t" style="top:309.20px;font-size:12.0px;color:#555;left:423.10px;">Gross Margin</div><div class="t" style="top:309.46px;font-size:11.7px;color:#555;right:454.60px;">69.24</div><div class="t" style="top:309.46px;font-size:11.7px;color:#555;right:385.40px;">68.38</div><div class="t" style="top:309.46px;font-size:11.7px;color:#555;right:313.70px;">-</div><div class="t" style="top:309.46px;font-size:11.7px;color:#555;right:238.70px;">101.26</div><div class="t" style="top:309.46px;font-size:11.7px;color:#555;right:169.20px;">69.24</div><div class="t" style="top:337.98px;font-size:12.0px;color:#555;left:423.10px;">Total Expense</div><div class="t" style="top:338.24px;font-size:11.7px;color:#3a82c2;right:454.60px;">363,373.41</div><div class="t" style="top:338.24px;font-size:11.7px;color:#555;right:385.40px;">342,202.08</div><div class="t" style="top:338.24px;font-size:11.7px;color:#555;right:313.70px;">21,171.33</div><div class="t" style="top:338.24px;font-size:11.7px;color:#555;right:238.70px;">106.19</div><div class="t" style="top:338.24px;font-size:11.7px;color:#555;right:169.20px;">422,059.05</div><div class="t" style="top:366.76px;font-size:12.0px;color:#555;left:423.10px;">Net</div><div class="t" style="top:367.02px;font-size:11.7px;color:#555;right:454.60px;">81,702.93</div><div class="t" style="top:367.02px;font-size:11.7px;color:#555;right:385.40px;">60,168.31</div><div class="t" style="top:367.02px;font-size:11.7px;color:#555;right:313.70px;">21,534.62</div><div class="t" style="top:367.02px;font-size:11.7px;color:#555;right:238.70px;">135.79</div><div class="t" style="top:367.02px;font-size:11.7px;color:#555;right:169.20px;">94,898.12</div><div class="t" style="top:395.54px;font-size:12.0px;color:#555;left:423.10px;">Net Margin</div><div class="t" style="top:395.80px;font-size:11.7px;color:#555;right:454.60px;">18.36</div><div class="t" style="top:395.80px;font-size:11.7px;color:#555;right:385.40px;">14.95</div><div class="t" style="top:395.80px;font-size:11.7px;color:#555;right:313.70px;">-</div><div class="t" style="top:395.80px;font-size:11.7px;color:#555;right:238.70px;">122.81</div><div class="t" style="top:395.80px;font-size:11.7px;color:#555;right:169.20px;">18.36</div><div class="t" style="top:424.32px;font-size:12.0px;color:#555;left:423.10px;">Absorption Rate</div><div class="t" style="top:424.58px;font-size:11.7px;color:#555;right:454.60px;">129.78</div><div class="t" style="top:424.58px;font-size:11.7px;color:#555;right:385.40px;">124.59</div><div class="t" style="top:424.58px;font-size:11.7px;color:#555;right:313.70px;">-</div><div class="t" style="top:424.58px;font-size:11.7px;color:#555;right:238.70px;">104.17</div><div class="t" style="top:424.58px;font-size:11.7px;color:#555;right:169.20px;">129.78</div><svg style="left:0;top:0" width="1916" height="1004"><g fill="none" stroke="#444" stroke-width="2.2" stroke-linecap="butt"><path d="M398.3 253.3 L404.3 257.5 L398.3 261.7"/><path d="M398.3 282.1 L404.3 286.3 L398.3 290.5"/><path d="M398.3 339.6 L404.3 343.8 L398.3 348.0"/></g></svg><div class="r" style="left:1728.5px;top:183.5px;width:3.2px;height:3.2px;background:#333;"></div><div class="r" style="left:1728.5px;top:190.5px;width:3.2px;height:3.2px;background:#333;"></div><div class="r" style="left:1728.5px;top:197.5px;width:3.2px;height:3.2px;background:#333;"></div><svg style="left:0;top:0" width="1916" height="1004"><line x1="447" y1="481" x2="1661" y2="481" stroke="#e6e6e6" stroke-width="1"/><line x1="447" y1="500.1" x2="1661" y2="500.1" stroke="#e6e6e6" stroke-width="1"/><line x1="447" y1="519.2" x2="1661" y2="519.2" stroke="#e6e6e6" stroke-width="1"/><line x1="447" y1="538.3" x2="1661" y2="538.3" stroke="#e6e6e6" stroke-width="1"/><line x1="447" y1="557.4" x2="1661" y2="557.4" stroke="#e6e6e6" stroke-width="1"/><line x1="563.5" y1="481" x2="563.5" y2="582" stroke="#e6e6e6" stroke-width="1"/><line x1="673.3" y1="481" x2="673.3" y2="582" stroke="#e6e6e6" stroke-width="1"/><line x1="783.0" y1="481" x2="783.0" y2="582" stroke="#e6e6e6" stroke-width="1"/><line x1="892.8" y1="481" x2="892.8" y2="582" stroke="#e6e6e6" stroke-width="1"/><line x1="1002.5" y1="481" x2="1002.5" y2="582" stroke="#e6e6e6" stroke-width="1"/><line x1="1112.3" y1="481" x2="1112.3" y2="582" stroke="#e6e6e6" stroke-width="1"/><line x1="1222.0" y1="481" x2="1222.0" y2="582" stroke="#e6e6e6" stroke-width="1"/><line x1="1331.8" y1="481" x2="1331.8" y2="582" stroke="#e6e6e6" stroke-width="1"/><line x1="1441.5" y1="481" x2="1441.5" y2="582" stroke="#e6e6e6" stroke-width="1"/><line x1="1551.3" y1="481" x2="1551.3" y2="582" stroke="#e6e6e6" stroke-width="1"/><line x1="1661.0" y1="481" x2="1661.0" y2="582" stroke="#e6e6e6" stroke-width="1"/><line x1="453.8" y1="481" x2="453.8" y2="582" stroke="#bdbdbd" stroke-width="1"/><line x1="447" y1="576.5" x2="1661" y2="576.5" stroke="#bdbdbd" stroke-width="1"/><path d="M453.80 510.50 C475.75 507.92 519.65 497.98 563.55 497.60 C607.44 497.22 629.39 506.78 673.29 508.60 C717.19 510.42 739.14 508.14 783.04 506.70 C826.93 505.26 848.88 501.06 892.78 501.40 C936.68 501.74 958.63 508.96 1002.53 508.40 C1046.43 507.84 1068.37 498.24 1112.27 498.60 C1156.17 498.96 1178.12 509.82 1222.02 510.20 C1265.92 510.58 1287.87 501.02 1331.76 500.50 C1375.66 499.98 1397.61 506.00 1441.51 507.60 C1485.41 509.20 1507.36 508.90 1551.25 508.50 C1595.15 508.10 1639.05 506.18 1661.00 505.60" fill="none" stroke="#3cc3e3" stroke-width="2"/><path d="M453.80 520.30 C475.75 517.96 519.65 509.00 563.55 508.60 C607.44 508.20 629.39 516.82 673.29 518.30 C717.19 519.78 739.14 517.32 783.04 516.00 C826.93 514.68 848.88 511.38 892.78 511.70 C936.68 512.02 958.63 518.14 1002.53 517.60 C1046.43 517.06 1068.37 508.68 1112.27 509.00 C1156.17 509.32 1178.12 518.80 1222.02 519.20 C1265.92 519.60 1287.87 511.40 1331.76 511.00 C1375.66 510.60 1397.61 515.80 1441.51 517.20 C1485.41 518.60 1507.36 518.40 1551.25 518.00 C1595.15 517.60 1639.05 515.76 1661.00 515.20" fill="none" stroke="#24504c" stroke-width="2"/><circle cx="453.8" cy="510.5" r="2.7" fill="#b9ecf7" stroke="#3cc3e3" stroke-width="1.4"/><circle cx="563.5" cy="497.6" r="2.7" fill="#b9ecf7" stroke="#3cc3e3" stroke-width="1.4"/><circle cx="673.3" cy="508.6" r="2.7" fill="#b9ecf7" stroke="#3cc3e3" stroke-width="1.4"/><circle cx="783.0" cy="506.7" r="2.7" fill="#b9ecf7" stroke="#3cc3e3" stroke-width="1.4"/><circle cx="892.8" cy="501.4" r="2.7" fill="#b9ecf7" stroke="#3cc3e3" stroke-width="1.4"/><circle cx="1002.5" cy="508.4" r="2.7" fill="#b9ecf7" stroke="#3cc3e3" stroke-width="1.4"/><circle cx="1112.3" cy="498.6" r="2.7" fill="#b9ecf7" stroke="#3cc3e3" stroke-width="1.4"/><circle cx="1222.0" cy="510.2" r="2.7" fill="#b9ecf7" stroke="#3cc3e3" stroke-width="1.4"/><circle cx="1331.8" cy="500.5" r="2.7" fill="#b9ecf7" stroke="#3cc3e3" stroke-width="1.4"/><circle cx="1441.5" cy="507.6" r="2.7" fill="#b9ecf7" stroke="#3cc3e3" stroke-width="1.4"/><circle cx="1551.3" cy="508.5" r="2.7" fill="#b9ecf7" stroke="#3cc3e3" stroke-width="1.4"/><circle cx="1661.0" cy="505.6" r="2.7" fill="#b9ecf7" stroke="#3cc3e3" stroke-width="1.4"/><circle cx="453.8" cy="520.3" r="2.7" fill="#9fb3b1" stroke="#24504c" stroke-width="1.4"/><circle cx="563.5" cy="508.6" r="2.7" fill="#9fb3b1" stroke="#24504c" stroke-width="1.4"/><circle cx="673.3" cy="518.3" r="2.7" fill="#9fb3b1" stroke="#24504c" stroke-width="1.4"/><circle cx="783.0" cy="516.0" r="2.7" fill="#9fb3b1" stroke="#24504c" stroke-width="1.4"/><circle cx="892.8" cy="511.7" r="2.7" fill="#9fb3b1" stroke="#24504c" stroke-width="1.4"/><circle cx="1002.5" cy="517.6" r="2.7" fill="#9fb3b1" stroke="#24504c" stroke-width="1.4"/><circle cx="1112.3" cy="509.0" r="2.7" fill="#9fb3b1" stroke="#24504c" stroke-width="1.4"/><circle cx="1222.0" cy="519.2" r="2.7" fill="#9fb3b1" stroke="#24504c" stroke-width="1.4"/><circle cx="1331.8" cy="511.0" r="2.7" fill="#9fb3b1" stroke="#24504c" stroke-width="1.4"/><circle cx="1441.5" cy="517.2" r="2.7" fill="#9fb3b1" stroke="#24504c" stroke-width="1.4"/><circle cx="1551.3" cy="518.0" r="2.7" fill="#9fb3b1" stroke="#24504c" stroke-width="1.4"/><circle cx="1661.0" cy="515.2" r="2.7" fill="#9fb3b1" stroke="#24504c" stroke-width="1.4"/><rect x="1668.7" y="488.8" width="35.6" height="8.6" fill="#c8d6d5" stroke="#1f3f3d" stroke-width="1.7"/><rect x="1668.7" y="504.8" width="35.6" height="8.6" fill="#b2ecf8" stroke="#3cc3e3" stroke-width="1.7"/></svg><div class="t" style="top:464.11px;font-size:10.5px;color:#666;font-weight:bold;left:1067.70px;transform:translateX(-50%);">Sales</div><div class="t" style="top:476.08px;font-size:10.3px;color:#666;right:1471.30px;">$1,000,000</div><div class="t" style="top:513.58px;font-size:10.3px;color:#666;right:1471.30px;">$600,000</div><div class="t" style="top:551.48px;font-size:10.3px;color:#666;right:1471.30px;">$200,000</div><div class="t" style="top:583.78px;font-size:10.3px;color:#666;left:453.80px;transform:translateX(-50%);">Feb 2017</div><div class="t" style="top:583.78px;font-size:10.3px;color:#666;left:563.55px;transform:translateX(-50%);">Mar 2017</div><div class="t" style="top:583.78px;font-size:10.3px;color:#666;left:673.29px;transform:translateX(-50%);">Apr 2017</div><div class="t" style="top:583.78px;font-size:10.3px;color:#666;left:783.04px;transform:translateX(-50%);">May 2017</div><div class="t" style="top:583.78px;font-size:10.3px;color:#666;left:892.78px;transform:translateX(-50%);">Jun 2017</div><div class="t" style="top:583.78px;font-size:10.3px;color:#666;left:1002.53px;transform:translateX(-50%);">Jul 2017</div><div class="t" style="top:583.78px;font-size:10.3px;color:#666;left:1112.27px;transform:translateX(-50%);">Aug 2017</div><div class="t" style="top:583.78px;font-size:10.3px;color:#666;left:1222.02px;transform:translateX(-50%);">Sept 2017</div><div class="t" style="top:583.78px;font-size:10.3px;color:#666;left:1331.76px;transform:translateX(-50%);">Oct 2017</div><div class="t" style="top:583.78px;font-size:10.3px;color:#666;left:1441.51px;transform:translateX(-50%);">Nov 2017</div><div class="t" style="top:583.78px;font-size:10.3px;color:#666;left:1551.25px;transform:translateX(-50%);">Dec 2017</div><div class="t" style="top:583.78px;font-size:10.3px;color:#666;left:1661.00px;transform:translateX(-50%);">Jan 2018</div><div class="t" style="top:488.78px;font-size:10.3px;color:#666;left:1709.00px;">Actual</div><div class="t" style="top:504.78px;font-size:10.3px;color:#666;left:1709.00px;">Budget</div><div class="r" style="left:383px;top:619px;width:447px;height:348px;background:#d3d6d3;border-radius:3px;"></div><div class="r" style="left:384px;top:620px;width:445px;height:347px;background:#ffffff;border-radius:2px;"></div><div class="t" style="top:632.35px;font-size:15.3px;color:#444;left:394.30px;">Operational Ratios</div><div class="r" style="left:384px;top:657px;width:445px;height:1px;background:#dedede;"></div><div class="t" style="top:667.10px;font-size:12.4px;color:#444;left:388.40px;transform: scaleX(1.0192);transform-origin:0 0;-webkit-text-stroke:0.25px #444;">Metric</div><div class="t" style="top:667.27px;font-size:12.2px;color:#444;right:1091.50px;transform: scaleX(0.9961);transform-origin:100% 0;-webkit-text-stroke:0.25px #444;">Actual ($)</div><div class="r" style="left:384px;top:690px;width:445px;height:1px;background:#dedede;"></div><div class="r" style="left:384px;top:718px;width:445px;height:1px;background:#dedede;"></div><div class="r" style="left:384px;top:747px;width:445px;height:1px;background:#dedede;"></div><div class="r" style="left:384px;top:776px;width:445px;height:1px;background:#dedede;"></div><div class="r" style="left:384px;top:805px;width:445px;height:1px;background:#dedede;"></div><div class="r" style="left:384px;top:833px;width:445px;height:1px;background:#dedede;"></div><div class="r" style="left:384px;top:862px;width:445px;height:1px;background:#dedede;"></div><div class="r" style="left:384px;top:891px;width:445px;height:1px;background:#dedede;"></div><div class="r" style="left:384px;top:920px;width:445px;height:1px;background:#dedede;"></div><div class="r" style="left:384px;top:948px;width:445px;height:1px;background:#dedede;"></div><div class="t" style="top:698.24px;font-size:12.0px;color:#3a82c2;left:388.40px;">Number of RO</div><div class="t" style="top:698.50px;font-size:11.7px;color:#555;right:1091.50px;">247</div><div class="t" style="top:726.97px;font-size:12.0px;color:#3a82c2;left:388.40px;">Gross Proft / RO</div><div class="t" style="top:727.23px;font-size:11.7px;color:#555;right:1091.50px;">624.72</div><div class="t" style="top:755.70px;font-size:12.0px;color:#3a82c2;left:388.40px;">Effective Labor Rate</div><div class="t" style="top:755.96px;font-size:11.7px;color:#555;right:1091.50px;">114.25</div><div class="t" style="top:784.43px;font-size:12.0px;color:#3a82c2;left:388.40px;">Efficiency (%)</div><div class="t" style="top:784.69px;font-size:11.7px;color:#555;right:1091.50px;">84.74</div><div class="t" style="top:813.16px;font-size:12.0px;color:#3a82c2;left:388.40px;">Open to Last Punch</div><div class="t" style="top:813.42px;font-size:11.7px;color:#555;right:1091.50px;">157.96</div><div class="t" style="top:841.89px;font-size:12.0px;color:#3a82c2;left:388.40px;">Productivity</div><div class="t" style="top:842.15px;font-size:11.7px;color:#555;right:1091.50px;">80.29</div><div class="t" style="top:870.62px;font-size:12.0px;color:#3a82c2;left:388.40px;">Proficiency</div><div class="t" style="top:870.88px;font-size:11.7px;color:#555;right:1091.50px;">68.04</div><div class="t" style="top:899.35px;font-size:12.0px;color:#3a82c2;left:388.40px;">Labor / RO</div><div class="t" style="top:899.61px;font-size:11.7px;color:#555;right:1091.50px;">692.65</div><div class="t" style="top:928.08px;font-size:12.0px;color:#3a82c2;left:388.40px;">Hours Bill / RO</div><div class="t" style="top:928.34px;font-size:11.7px;color:#555;right:1091.50px;">5.14</div><div class="t" style="top:956.81px;font-size:12.0px;color:#3a82c2;left:388.40px;">Parts / RO</div><div class="t" style="top:957.07px;font-size:11.7px;color:#555;right:1091.50px;">447.55</div><div class="r" style="left:839px;top:619px;width:913px;height:348px;background:#d3d6d3;border-radius:3px;"></div><div class="r" style="left:840px;top:620px;width:911px;height:347px;background:#ffffff;border-radius:2px;"></div><div class="t" style="top:632.35px;font-size:15.3px;color:#444;left:850.80px;">Dwell Time</div><div class="r" style="left:840px;top:657px;width:911px;height:1px;background:#dedede;"></div><div class="r" style="left:1226px;top:662px;width:135px;height:27px;background:#cfcfcf;"></div><div class="r" style="left:1227px;top:663px;width:133px;height:25px;background:#ffffff;"></div><div class="t" style="top:671.13px;font-size:11.9px;color:#666;left:1233.60px;">Open to Last Punch</div><svg style="left:0;top:0" width="1916" height="1004"><path d="M1349 672 L1355 672 L1352 677 Z" fill="#444"/></svg><svg style="left:0;top:0" width="1916" height="967" viewBox="0 0 1916 967"><line x1="878" y1="703.0" x2="1667.6" y2="703.0" stroke="#e6e6e6" stroke-width="1"/><line x1="878" y1="743.7" x2="1667.6" y2="743.7" stroke="#e6e6e6" stroke-width="1"/><line x1="878" y1="784.4" x2="1667.6" y2="784.4" stroke="#e6e6e6" stroke-width="1"/><line x1="878" y1="825.1" x2="1667.6" y2="825.1" stroke="#e6e6e6" stroke-width="1"/><line x1="878" y1="865.8" x2="1667.6" y2="865.8" stroke="#e6e6e6" stroke-width="1"/><line x1="878" y1="906.5" x2="1667.6" y2="906.5" stroke="#e6e6e6" stroke-width="1"/><line x1="878" y1="947.2" x2="1667.6" y2="947.2" stroke="#e6e6e6" stroke-width="1"/><line x1="949.5" y1="697" x2="949.5" y2="967" stroke="#e6e6e6" stroke-width="1"/><line x1="1014.8" y1="697" x2="1014.8" y2="967" stroke="#e6e6e6" stroke-width="1"/><line x1="1080.0" y1="697" x2="1080.0" y2="967" stroke="#e6e6e6" stroke-width="1"/><line x1="1145.3" y1="697" x2="1145.3" y2="967" stroke="#e6e6e6" stroke-width="1"/><line x1="1210.6" y1="697" x2="1210.6" y2="967" stroke="#e6e6e6" stroke-width="1"/><line x1="1275.9" y1="697" x2="1275.9" y2="967" stroke="#e6e6e6" stroke-width="1"/><line x1="1341.2" y1="697" x2="1341.2" y2="967" stroke="#e6e6e6" stroke-width="1"/><line x1="1406.5" y1="697" x2="1406.5" y2="967" stroke="#e6e6e6" stroke-width="1"/><line x1="1471.8" y1="697" x2="1471.8" y2="967" stroke="#e6e6e6" stroke-width="1"/><line x1="1537.0" y1="697" x2="1537.0" y2="967" stroke="#e6e6e6" stroke-width="1"/><line x1="1602.3" y1="697" x2="1602.3" y2="967" stroke="#e6e6e6" stroke-width="1"/><line x1="1667.6" y1="697" x2="1667.6" y2="967" stroke="#e6e6e6" stroke-width="1"/><path d="M884.20 892.30 C897.26 885.08 923.37 866.56 949.48 856.20 C975.60 845.84 988.65 845.14 1014.77 840.50 C1040.88 835.86 1053.94 830.50 1080.05 833.00 C1106.16 835.50 1119.22 847.90 1145.33 853.00 C1171.45 858.10 1184.50 853.70 1210.62 858.50 C1236.73 863.30 1249.79 874.50 1275.90 877.00 C1302.01 879.50 1315.07 868.38 1341.18 871.00 C1367.30 873.62 1380.35 891.78 1406.47 890.10 C1432.58 888.42 1445.64 866.12 1471.75 862.60 C1497.86 859.08 1510.92 863.46 1537.03 872.50 C1563.15 881.54 1576.20 898.32 1602.32 907.80 C1628.43 917.28 1654.54 917.48 1667.60 919.90 L1667.6 967 L884.2 967 Z" fill="#b3ecfa"/><path d="M884.20 985.00 C897.26 976.44 923.37 954.30 949.48 942.20 C975.60 930.10 988.65 928.98 1014.77 924.50 C1040.88 920.02 1053.94 919.64 1080.05 919.80 C1106.16 919.96 1119.22 923.18 1145.33 925.30 C1171.45 927.42 1184.50 925.54 1210.62 930.40 C1236.73 935.26 1249.79 945.44 1275.90 949.60 C1302.01 953.76 1315.07 944.12 1341.18 951.20 C1367.30 958.28 1380.35 986.00 1406.47 985.00 C1432.58 984.00 1445.64 949.96 1471.75 946.20 C1497.86 942.44 1510.92 955.44 1537.03 966.20 C1563.15 976.96 1576.20 991.24 1602.32 1000.00 C1628.43 1008.76 1654.54 1008.00 1667.60 1010.00 L1667.6 1010 L884.2 1010 Z" fill="#8ed2de"/><path d="M884.20 892.30 C897.26 885.08 923.37 866.56 949.48 856.20 C975.60 845.84 988.65 845.14 1014.77 840.50 C1040.88 835.86 1053.94 830.50 1080.05 833.00 C1106.16 835.50 1119.22 847.90 1145.33 853.00 C1171.45 858.10 1184.50 853.70 1210.62 858.50 C1236.73 863.30 1249.79 874.50 1275.90 877.00 C1302.01 879.50 1315.07 868.38 1341.18 871.00 C1367.30 873.62 1380.35 891.78 1406.47 890.10 C1432.58 888.42 1445.64 866.12 1471.75 862.60 C1497.86 859.08 1510.92 863.46 1537.03 872.50 C1563.15 881.54 1576.20 898.32 1602.32 907.80 C1628.43 917.28 1654.54 917.48 1667.60 919.90" fill="none" stroke="#3cc3e3" stroke-width="2"/><path d="M884.20 985.00 C897.26 976.44 923.37 954.30 949.48 942.20 C975.60 930.10 988.65 928.98 1014.77 924.50 C1040.88 920.02 1053.94 919.64 1080.05 919.80 C1106.16 919.96 1119.22 923.18 1145.33 925.30 C1171.45 927.42 1184.50 925.54 1210.62 930.40 C1236.73 935.26 1249.79 945.44 1275.90 949.60 C1302.01 953.76 1315.07 944.12 1341.18 951.20 C1367.30 958.28 1380.35 986.00 1406.47 985.00 C1432.58 984.00 1445.64 949.96 1471.75 946.20 C1497.86 942.44 1510.92 955.44 1537.03 966.20 C1563.15 976.96 1576.20 991.24 1602.32 1000.00 C1628.43 1008.76 1654.54 1008.00 1667.60 1010.00" fill="none" stroke="#1e6a6e" stroke-width="2"/><line x1="949.5" y1="830" x2="949.5" y2="967" stroke="rgba(0,0,0,0.06)" stroke-width="1"/><line x1="1014.8" y1="830" x2="1014.8" y2="967" stroke="rgba(0,0,0,0.06)" stroke-width="1"/><line x1="1080.0" y1="830" x2="1080.0" y2="967" stroke="rgba(0,0,0,0.06)" stroke-width="1"/><line x1="1145.3" y1="830" x2="1145.3" y2="967" stroke="rgba(0,0,0,0.06)" stroke-width="1"/><line x1="1210.6" y1="830" x2="1210.6" y2="967" stroke="rgba(0,0,0,0.06)" stroke-width="1"/><line x1="1275.9" y1="830" x2="1275.9" y2="967" stroke="rgba(0,0,0,0.06)" stroke-width="1"/><line x1="1341.2" y1="830" x2="1341.2" y2="967" stroke="rgba(0,0,0,0.06)" stroke-width="1"/><line x1="1406.5" y1="830" x2="1406.5" y2="967" stroke="rgba(0,0,0,0.06)" stroke-width="1"/><line x1="1471.8" y1="830" x2="1471.8" y2="967" stroke="rgba(0,0,0,0.06)" stroke-width="1"/><line x1="1537.0" y1="830" x2="1537.0" y2="967" stroke="rgba(0,0,0,0.06)" stroke-width="1"/><line x1="1602.3" y1="830" x2="1602.3" y2="967" stroke="rgba(0,0,0,0.06)" stroke-width="1"/><line x1="1667.6" y1="830" x2="1667.6" y2="967" stroke="rgba(0,0,0,0.06)" stroke-width="1"/><line x1="884.2" y1="697" x2="884.2" y2="967" stroke="#bdbdbd" stroke-width="1"/><circle cx="884.2" cy="892.3" r="2.8" fill="#a8e6f5" stroke="#3cc3e3" stroke-width="1.3"/><circle cx="949.5" cy="856.2" r="2.8" fill="#a8e6f5" stroke="#3cc3e3" stroke-width="1.3"/><circle cx="1014.8" cy="840.5" r="2.8" fill="#a8e6f5" stroke="#3cc3e3" stroke-width="1.3"/><circle cx="1080.0" cy="833.0" r="2.8" fill="#a8e6f5" stroke="#3cc3e3" stroke-width="1.3"/><circle cx="1145.3" cy="853.0" r="2.8" fill="#a8e6f5" stroke="#3cc3e3" stroke-width="1.3"/><circle cx="1210.6" cy="858.5" r="2.8" fill="#a8e6f5" stroke="#3cc3e3" stroke-width="1.3"/><circle cx="1275.9" cy="877.0" r="2.8" fill="#a8e6f5" stroke="#3cc3e3" stroke-width="1.3"/><circle cx="1341.2" cy="871.0" r="2.8" fill="#a8e6f5" stroke="#3cc3e3" stroke-width="1.3"/><circle cx="1406.5" cy="890.1" r="2.8" fill="#a8e6f5" stroke="#3cc3e3" stroke-width="1.3"/><circle cx="1471.8" cy="862.6" r="2.8" fill="#a8e6f5" stroke="#3cc3e3" stroke-width="1.3"/><circle cx="1537.0" cy="872.5" r="2.8" fill="#a8e6f5" stroke="#3cc3e3" stroke-width="1.3"/><circle cx="1602.3" cy="907.8" r="2.8" fill="#a8e6f5" stroke="#3cc3e3" stroke-width="1.3"/><circle cx="1667.6" cy="919.9" r="2.8" fill="#a8e6f5" stroke="#3cc3e3" stroke-width="1.3"/><circle cx="884.2" cy="985.0" r="2.8" fill="#7fbcc2" stroke="#1e6a6e" stroke-width="1.3"/><circle cx="949.5" cy="942.2" r="2.8" fill="#7fbcc2" stroke="#1e6a6e" stroke-width="1.3"/><circle cx="1014.8" cy="924.5" r="2.8" fill="#7fbcc2" stroke="#1e6a6e" stroke-width="1.3"/><circle cx="1080.0" cy="919.8" r="2.8" fill="#7fbcc2" stroke="#1e6a6e" stroke-width="1.3"/><circle cx="1145.3" cy="925.3" r="2.8" fill="#7fbcc2" stroke="#1e6a6e" stroke-width="1.3"/><circle cx="1210.6" cy="930.4" r="2.8" fill="#7fbcc2" stroke="#1e6a6e" stroke-width="1.3"/><circle cx="1275.9" cy="949.6" r="2.8" fill="#7fbcc2" stroke="#1e6a6e" stroke-width="1.3"/><circle cx="1341.2" cy="951.2" r="2.8" fill="#7fbcc2" stroke="#1e6a6e" stroke-width="1.3"/><circle cx="1406.5" cy="985.0" r="2.8" fill="#7fbcc2" stroke="#1e6a6e" stroke-width="1.3"/><circle cx="1471.8" cy="946.2" r="2.8" fill="#7fbcc2" stroke="#1e6a6e" stroke-width="1.3"/><circle cx="1537.0" cy="966.2" r="2.8" fill="#7fbcc2" stroke="#1e6a6e" stroke-width="1.3"/><circle cx="1602.3" cy="1000" r="2.8" fill="#7fbcc2" stroke="#1e6a6e" stroke-width="1.3"/><circle cx="1667.6" cy="1010" r="2.8" fill="#7fbcc2" stroke="#1e6a6e" stroke-width="1.3"/><rect x="1675.5" y="706.4" width="35" height="9.6" fill="#c9dcdc" stroke="#1f4a4a" stroke-width="2"/><rect x="1675.5" y="724.9" width="35" height="9.6" fill="#c9dcdc" stroke="#1f4a4a" stroke-width="2"/><rect x="1675.5" y="743.3" width="35" height="9.6" fill="#c9dcdc" stroke="#1f5a5a" stroke-width="2"/><rect x="1675.5" y="761.7" width="35" height="9.6" fill="#c8ecf3" stroke="#2a9ab0" stroke-width="2"/><rect x="1675.5" y="780.2" width="35" height="9.6" fill="#b3ecfa" stroke="#3cc3e3" stroke-width="2"/></svg><div class="t" style="top:697.98px;font-size:10.3px;color:#666;right:1040.80px;">100%</div><div class="t" style="top:738.68px;font-size:10.3px;color:#666;right:1040.80px;">90%</div><div class="t" style="top:779.38px;font-size:10.3px;color:#666;right:1040.80px;">80%</div><div class="t" style="top:820.08px;font-size:10.3px;color:#666;right:1040.80px;">70%</div><div class="t" style="top:860.78px;font-size:10.3px;color:#666;right:1040.80px;">60%</div><div class="t" style="top:901.48px;font-size:10.3px;color:#666;right:1040.80px;">50%</div><div class="t" style="top:942.18px;font-size:10.3px;color:#666;right:1040.80px;">40%</div><div class="t" style="top:707.48px;font-size:10.3px;color:#666;left:1716.20px;">&lt;= 4</div><div class="t" style="top:725.98px;font-size:10.3px;color:#666;left:1716.20px;text-decoration:line-through;">&lt;= 10</div><div class="t" style="top:744.38px;font-size:10.3px;color:#666;left:1716.20px;">&lt;= 24</div><div class="t" style="top:762.78px;font-size:10.3px;color:#666;left:1716.20px;text-decoration:line-through;">&lt;= 48</div><div class="t" style="top:781.28px;font-size:10.3px;color:#666;left:1716.20px;">&lt;= 72</div><div class="r" style="left:1778px;top:133px;width:14px;height:833px;background:#efefef;"></div><div class="r" style="left:1780px;top:151px;width:11px;height:372px;background:#c2c2c2;"></div><svg style="left:0;top:0" width="1916" height="1004"><path d="M1781 144 L1785.5 139.5 L1790 144 Z" fill="#333"/><path d="M1781 956 L1785.5 960.5 L1790 956 Z" fill="#333"/></svg><div class="r" style="left:122px;top:967px;width:1672px;height:37px;background:#2f2f2f;"></div><div class="r" style="left:1445px;top:967px;width:349px;height:37px;background:#4a4a4a;"></div><div class="r" style="left:333px;top:966px;width:1461px;height:2px;background:#2b6ca3;"></div><div class="t" style="top:984.40px;font-size:11.1px;color:#eaeaea;left:253.20px;transform: scaleX(0.9032);transform-origin:0 0;">PROCEDESOFTWARE\</div><div class="t" style="top:984.40px;font-size:11.1px;color:#eaeaea;left:438.80px;transform: scaleX(0.9730);transform-origin:0 0;">DEMO</div><div class="t" style="top:984.40px;font-size:11.1px;color:#eaeaea;left:493.70px;transform: scaleX(0.8839);transform-origin:0 0;">P9</div><div class="t" style="top:974.75px;font-size:29px;color:#ffffff;left:128.60px;transform: scaleX(0.9604);transform-origin:0 0;-webkit-text-stroke:0.9px currentColor;">e<span style="color:#62c25a">x</span>cede</div></body></html>
